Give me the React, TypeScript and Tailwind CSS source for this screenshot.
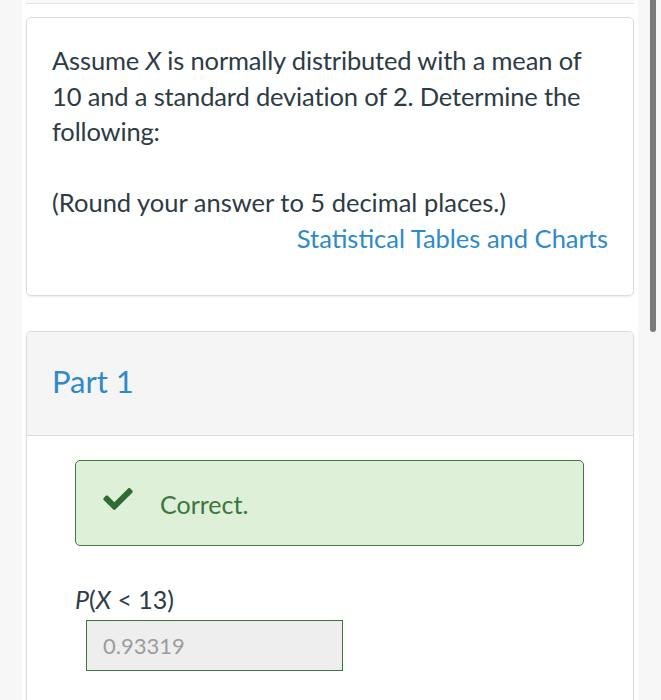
import React from 'react';

const FONT = "font-['Lato','Noto_Sans',sans-serif]";

/* ---------------- Icons ---------------- */
function CheckIcon() {
  return (
    <svg viewBox="0 64 512 400" className="w-[30px] h-[23px] text-[#2f6b33] -mt-[8px]" fill="currentColor">
      <path d="M173.9 439.4l-166.4-166.4c-10-10-10-26.2 0-36.2l36.2-36.2c10-10 26.2-10 36.2 0L192 312.7 432.1 72.6c10-10 26.2-10 36.2 0l36.2 36.2c10 10 10 26.2 0 36.2L210.1 439.4c-10 10-26.2 10-36.2 0z" />
    </svg>
  );
}

export default function App() {
  return (
    <div className={`min-h-[700px] h-[700px] overflow-hidden flex bg-[#f7f7f7] text-[#2d3b45] ${FONT}`}>
      {/* left gutter */}
      <div className="w-[22px] shrink-0" />

      {/* main column */}
      <div className="w-[616px] shrink-0 bg-white px-[4px]">
        {/* bottom edge of previous card */}
        <div className="h-[4px] border-b border-[#e4e4e4] bg-[#f9f9f9]" />

        {/* Question card */}
        <div className="mt-[13px] border border-[#dcdcdc] rounded-[5px] shadow-[0_1px_2px_rgba(0,0,0,0.08)] pt-[25px] pb-[39px] pl-[25px] pr-[25px] text-[25.5px] leading-[35.5px]">
          <p className="tracking-[-0.15px] pr-[20px]">
            Assume <i>X</i> is normally distributed with a mean of 10 and a standard deviation of 2. Determine the following:
          </p>
          <p className="mt-[35.5px]">(Round your answer to 5 decimal places.)</p>
          <div className="text-right">
            <a className="text-[#2d8acb]">Statistical Tables and Charts</a>
          </div>
        </div>

        {/* Part card */}
        <div className="mt-[35px] border border-[#dcdcdc] rounded-t-[5px] shadow-[0_1px_2px_rgba(0,0,0,0.08)]">
          <div className="h-[104px] bg-[#f5f5f5] border-b border-[#dcdcdc] flex items-center pl-[25px] rounded-t-[5px]">
            <h2 className="text-[31px] text-[#2d8acb] -mt-[4px]">Part 1</h2>
          </div>

          <div className="pl-[48px] pr-[49px] pt-[24px] pb-[40px]">
            <div className="h-[86px] bg-[#dff0d8] border border-[#3f7a43] rounded-[5px] flex items-center pl-[27px] text-[#3c763d] text-[25px]">
              <CheckIcon />
              <span className="ml-[27px] mt-[3px]">Correct.</span>
            </div>

            <div className="mt-[36px] text-[25px] leading-[34px]">
              <i>P</i>(<i>X</i> &lt; 13)
            </div>
            <div className="mt-[4px] ml-[11px] w-[257px] h-[51px] bg-[#eeeeee] border border-[#3c763d] flex items-center pl-[16px] text-[22px] text-[#9c9c9c]">
              0.93319
            </div>
          </div>
        </div>
      </div>

      {/* right gutter with scrollbar */}
      <div className="flex-1 pl-[12px]">
        <div className="w-[6px] h-[332px] bg-[#7a7a7a] rounded-b-full" />
      </div>
    </div>
  );
}
